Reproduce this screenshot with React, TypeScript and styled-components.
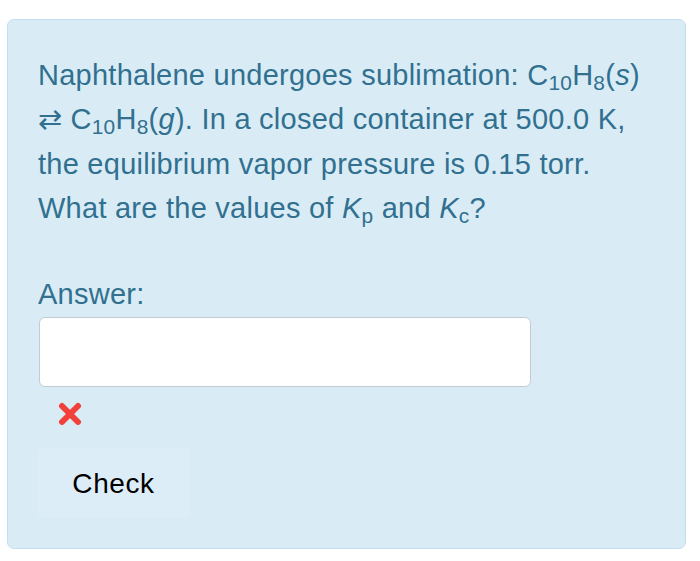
import { createGlobalStyle } from "styled-components";
import styled from "styled-components";

const GlobalStyle = createGlobalStyle`
    body {
        margin: 0;
        background: #fff;
        font-family: "Liberation Sans", Arial, sans-serif;
    }
`;

const Panel = styled.div`
    box-sizing: border-box;
    margin: 19px 0 0 7px;
    width: 679px;
    height: 530px;
    padding: 33px 30px 0 30px;
    background: #d9ecf6;
    border: 1px solid #c3def0;
    border-radius: 7px;
    color: #31708f;
`;

const Question = styled.p`
    margin: 0;
    font-size: 29px;
    letter-spacing: 0.25px;
    line-height: 44.4px;
`;

const Sub = styled.sub`
    font-size: 0.72em;
    vertical-align: -0.25em;
    line-height: 0;
`;

const Label = styled.div`
    margin-top: 46px;
    font-size: 29px;
    letter-spacing: 0.25px;
    line-height: 34px;
`;

const AnswerInput = styled.input`
    display: block;
    box-sizing: border-box;
    margin: 6px 0 0 1px;
    width: 492px;
    height: 70px;
    background: #fff;
    border: 1.5px solid #c3ccd3;
    border-radius: 6px;
    font-size: 24px;
    padding: 0 12px;
`;

const Feedback = styled.div`
    margin: 15px 0 0 20px;
    height: 24px;
`;

const CheckButton = styled.button`
    display: block;
    margin: 21px 0 0 -1px;
    width: 153px;
    height: 71px;
    background: #dcedf8;
    border: none;
    border-radius: 6px;
    color: #000;
    font-family: "Liberation Sans", Arial, sans-serif;
    font-size: 28px;
    letter-spacing: 0.6px;
    padding: 4px 0 0;
`;

const Cross = () => (
    <svg width="24" height="24" viewBox="0 0 24 24">
        <g stroke="#f2413a" strokeWidth="6" strokeLinecap="round">
            <line x1="4" y1="4" x2="20" y2="20" />
            <line x1="20" y1="4" x2="4" y2="20" />
        </g>
    </svg>
);

export default function App() {
    return (
        <>
            <GlobalStyle />
            <Panel>
                <Question>
                    Naphthalene undergoes sublimation: C<Sub>10</Sub>H<Sub>8</Sub>(<i>s</i>)
                    <br />
                    ⇄ C<Sub>10</Sub>H<Sub>8</Sub>(<i>g</i>). In a closed container at 500.0 K,
                    <br />
                    the equilibrium vapor pressure is 0.15 torr.
                    <br />
                    What are the values of <i>K</i><Sub>p</Sub> and <i>K</i><Sub>c</Sub>?
                </Question>
                <Label>Answer:</Label>
                <AnswerInput type="text" />
                <Feedback>
                    <Cross />
                </Feedback>
                <CheckButton>Check</CheckButton>
            </Panel>
        </>
    );
}
